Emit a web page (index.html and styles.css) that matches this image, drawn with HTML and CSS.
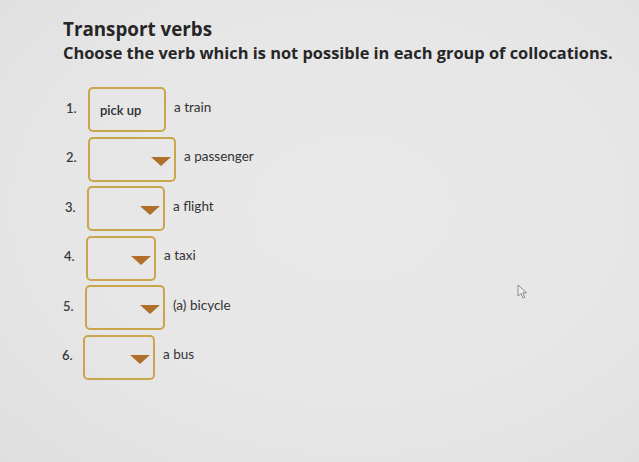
FILE: index.html
```html
<!DOCTYPE html>
<html>
<head>
<meta charset="utf-8">
<link rel="stylesheet" href="styles.css">
</head>
<body>
<main class="page">
  <h1 class="title">Transport verbs</h1>
  <p class="subtitle">Choose the verb which is not possible in each group of collocations.</p>
  <ol class="items">
    <li class="item item-1">
      <span class="num">1.</span>
      <span class="box box-1"><span class="answer">pick up</span></span>
      <span class="label">a train</span>
    </li>
    <li class="item item-2">
      <span class="num">2.</span>
      <span class="box box-2"><span class="caret"></span></span>
      <span class="label">a passenger</span>
    </li>
    <li class="item item-3">
      <span class="num">3.</span>
      <span class="box box-3"><span class="caret"></span></span>
      <span class="label">a flight</span>
    </li>
    <li class="item item-4">
      <span class="num">4.</span>
      <span class="box box-4"><span class="caret"></span></span>
      <span class="label">a taxi</span>
    </li>
    <li class="item item-5">
      <span class="num">5.</span>
      <span class="box box-5"><span class="caret"></span></span>
      <span class="label">(a) bicycle</span>
    </li>
    <li class="item item-6">
      <span class="num">6.</span>
      <span class="box box-6"><span class="caret"></span></span>
      <span class="label">a bus</span>
    </li>
  </ol>
  <svg class="cursor" width="12" height="16" viewBox="0 0 12 16"><path d="M1 1 L1 12 L4 9.5 L6 14 L7.8 13.2 L5.8 8.8 L9.5 8.8 Z" fill="#f2f2f2" stroke="#8a8a8a" stroke-width="1"/></svg>
</main>
</body>
</html>
```
FILE: styles.css
```css
html, body {
  margin: 0;
  padding: 0;
}
body {
  width: 639px;
  height: 462px;
  overflow: hidden;
  background: radial-gradient(ellipse at 55% 45%, #e9e9e9 0%, #e6e6e6 60%, #dfdfdf 100%);
  font-family: Lato, "Open Sans", sans-serif;
  color: #2b2b2b;
}
.page {
  position: relative;
  padding: 16px 0 0 63px;
  height: 446px;
}
.title {
  margin: 0;
  font-family: "Open Sans", Lato, sans-serif;
  font-size: 18.8px;
  font-weight: 700;
  line-height: 26px;
  color: #262626;
}
.subtitle {
  margin: 0;
  font-family: "Open Sans", Lato, sans-serif;
  font-size: 16.4px;
  font-weight: 700;
  line-height: 22px;
  color: #262626;
}
.items {
  list-style: none;
  margin: 0;
  padding: 23px 0 0 0;
  display: flex;
  flex-direction: column;
  gap: 4px;
}
.item {
  display: flex;
  align-items: center;
  height: 45.5px;
  font-size: 13.5px;
}
.num {
  width: 22px;
  font-weight: 600;
  color: #3a3a3a;
  font-size: 13px;
  position: relative;
  top: -2px;
}
.item-1 { padding-left: 3px; }
.item-2 { padding-left: 3px; }
.item-3 { padding-left: 2px; }
.item-4 { padding-left: 1px; }
.item-5 { padding-left: 0; }
.item-6 { padding-left: 0; margin-left: -1px; }
.item-6 .num { width: 21px; }
.box {
  box-sizing: border-box;
  height: 45px;
  border: 2px solid #c9a64c;
  border-radius: 5px;
  background: transparent;
  display: flex;
  align-items: center;
  justify-content: flex-end;
  padding-right: 3px;
}
.box-1 { width: 78px; justify-content: flex-start; padding-left: 10px; }
.box-2 { width: 88px; }
.box-3 { width: 78px; }
.box-4 { width: 70px; }
.box-5 { width: 80px; }
.box-6 { width: 72px; }
.answer {
  font-weight: 600;
  font-size: 13px;
  color: #2e2e2e;
}
.caret {
  width: 0;
  height: 0;
  border-left: 10px solid transparent;
  border-right: 10px solid transparent;
  border-top: 9px solid #b06f2a;
  margin-top: 4px;
}
.label {
  margin-left: 8px;
  color: #333;
  position: relative;
  top: -3px;
}
.cursor {
  position: absolute;
  left: 517px;
  top: 284px;
}
```
